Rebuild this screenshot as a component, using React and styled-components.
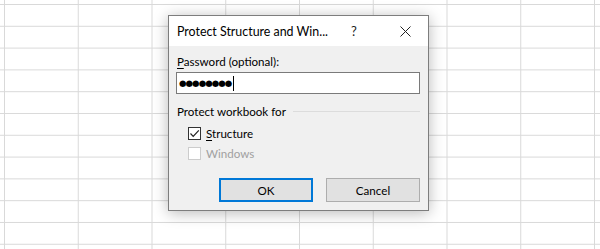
import React from 'react'
import styled, { createGlobalStyle } from 'styled-components'

const GlobalStyle = createGlobalStyle`
  html, body {
    margin: 0;
    padding: 0;
  }
  body {
    font-family: Lato, "Noto Sans", sans-serif;
    color: #000;
  }
`

const Sheet = styled.div`
  width: 600px;
  height: 249px;
  overflow: hidden;
  box-sizing: border-box;
  padding: 15px 0 0 168px;
  background-color: #fff;
  background-image:
    linear-gradient(to right, #d9d9d9 1px, transparent 1px),
    linear-gradient(to bottom, #d9d9d9 1px, transparent 1px);
  background-size: 73.75px 21.8px;
  background-position: 4px 4px;
`

const Dialog = styled.div`
  width: 261px;
  height: 196px;
  box-sizing: border-box;
  border: 1px solid #7d7d7d;
  background: #f0f0f0;
  box-shadow: 0 2px 14px rgba(0, 0, 0, 0.28);
  display: flex;
  flex-direction: column;
`

const TitleBar = styled.div`
  height: 30px;
  background: #fff;
  display: flex;
  align-items: center;
  padding-left: 8px;
  font-size: 12.4px;
`

const Title = styled.div`
  flex: 1;
  white-space: nowrap;
`

const TitleButton = styled.div`
  width: ${({ $w }) => $w}px;
  margin-right: ${({ $gap }) => $gap || 0}px;
  display: flex;
  justify-content: center;
  align-items: center;
  font-size: 13px;
  color: #222;
`

const Body = styled.div`
  flex: 1;
  padding: 8px 8px 8px 7px;
  display: flex;
  flex-direction: column;
  font-size: 11.6px;
`

const Label = styled.div`
  height: 16px;
  line-height: 16px;
  margin-left: 1px;
`

const Underline = styled.span`
  text-decoration: underline;
  text-underline-offset: 2px;
`

const Input = styled.div`
  margin-top: 2px;
  height: 22px;
  box-sizing: border-box;
  border: 1px solid #7a7a7a;
  background: #fff;
  display: flex;
  align-items: center;
  padding-left: 2px;
  font-family: "DejaVu Sans", sans-serif;
  font-size: 8.6px;
  letter-spacing: -0.95px;
`

const Caret = styled.span`
  display: inline-block;
  width: 1px;
  height: 15px;
  background: #000;
  margin-left: 2px;
`

const GroupHeader = styled.div`
  margin-top: 9px;
  display: flex;
  align-items: center;
  gap: 7px;
  height: 16px;
  margin-left: 1px;
`

const Rule = styled.div`
  flex: 1;
  height: 1px;
  background: #dcdcdc;
`

const Options = styled.div`
  margin-top: 8px;
  padding-left: 12px;
  display: flex;
  flex-direction: column;
  gap: 7px;
`

const Option = styled.div`
  display: flex;
  align-items: center;
  gap: 5px;
  height: 13px;
  color: ${({ $disabled }) => ($disabled ? '#a0a0a0' : '#000')};
`

const Box = styled.div`
  width: 13px;
  height: 13px;
  box-sizing: border-box;
  border: 1px solid ${({ $disabled }) => ($disabled ? '#cccccc' : '#333')};
  background: #fff;
  display: flex;
  align-items: center;
  justify-content: center;
`

const Buttons = styled.div`
  margin-top: auto;
  display: flex;
  justify-content: flex-end;
  gap: 13px;
`

const Button = styled.div`
  width: 94px;
  height: 24px;
  box-sizing: border-box;
  border: 1px solid ${({ $default }) => ($default ? '#0078d7' : '#adadad')};
  box-shadow: ${({ $default }) => ($default ? 'inset 0 0 0 1px #0078d7' : 'none')};
  background: #e1e1e1;
  display: flex;
  align-items: center;
  justify-content: center;
`

const Check = () => (
  <svg width="11" height="11" viewBox="0 0 11 11">
    <path d="M1.5 5.5 L4.2 8.3 L9.8 2.3" fill="none" stroke="#222" strokeWidth="1.2" />
  </svg>
)

const Close = () => (
  <svg width="11" height="11" viewBox="0 0 11 11">
    <path d="M0.5 0.5 L10.5 10.5 M10.5 0.5 L0.5 10.5" fill="none" stroke="#222" strokeWidth="1" />
  </svg>
)

export default function App() {
  return (
    <>
      <GlobalStyle />
      <Sheet>
        <Dialog>
          <TitleBar>
            <Title>Protect Structure and Win...</Title>
            <TitleButton $w={20} $gap={18}>?</TitleButton>
            <TitleButton $w={46}>
              <Close />
            </TitleButton>
          </TitleBar>
          <Body>
            <Label>
              <Underline>P</Underline>assword (optional):
            </Label>
            <Input>
              ●●●●●●●●
              <Caret />
            </Input>
            <GroupHeader>
              Protect workbook for
              <Rule />
            </GroupHeader>
            <Options>
              <Option>
                <Box>
                  <Check />
                </Box>
                <span>
                  <Underline>S</Underline>tructure
                </span>
              </Option>
              <Option $disabled>
                <Box $disabled />
                <span>Windows</span>
              </Option>
            </Options>
            <Buttons>
              <Button $default>OK</Button>
              <Button>Cancel</Button>
            </Buttons>
          </Body>
        </Dialog>
      </Sheet>
    </>
  )
}
